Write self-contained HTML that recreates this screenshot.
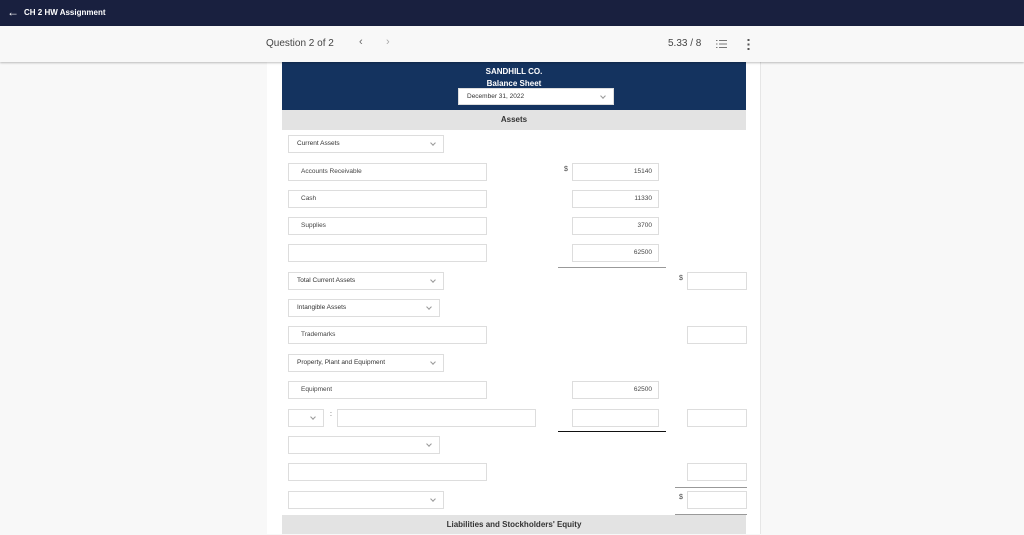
<!DOCTYPE html>
<html><head><meta charset="utf-8"><style>
*{box-sizing:border-box;margin:0;padding:0}
body{width:1024px;height:534px;overflow:hidden;background:#f8f8f8;font-family:"Liberation Sans",sans-serif;position:relative}
.a{position:absolute}
.top{left:0;top:0;width:1024px;height:26px;background:#19203f;color:#fff;font-size:8px;font-weight:bold}
.sub{left:0;top:26px;width:1024px;height:36px;background:#f8f8f8;box-shadow:0 1px 2px rgba(0,0,0,.25);z-index:2}
.page{left:267px;top:62px;width:494px;height:472px;background:#fff;border-right:1px solid #e6e6e6}
.navy{left:282px;top:62px;width:464px;height:48px;background:#14335f;color:#fff;text-align:center;font-size:8px;font-weight:bold}
.gray{background:#e3e3e3;font-size:8px;font-weight:bold;color:#333;text-align:center}
.in{border:1px solid #ddd;background:#fff;font-size:6.5px;color:#444;line-height:16px;padding-left:12px}
.sel{border:1px solid #ddd;background:#fff;font-size:6.5px;color:#333;line-height:16px;padding-left:8px}
.sel:after{content:"";position:absolute;right:8px;top:5px;width:3px;height:3px;border-right:1px solid #999;border-bottom:1px solid #999;transform:rotate(45deg)}
.num{border:1px solid #ddd;background:#fff;font-size:6.5px;color:#444;line-height:16px;text-align:right;padding-right:6px}
.d{font-size:7px;color:#444}
.ln{height:1px;background:#999}
</style></head><body>
<div class="a top"><span class="a" style="left:7px;top:5px;font-size:12px;font-weight:normal">&#8592;</span><span class="a" style="left:24px;top:8px">CH 2 HW Assignment</span></div>
<div class="a sub">
<span class="a" style="left:266px;top:12px;font-size:10px;color:#444">Question 2 of 2</span>
<span class="a" style="left:359px;top:10px;font-size:11px;color:#666">&#8249;</span>
<span class="a" style="left:386px;top:10px;font-size:11px;color:#aaa">&#8250;</span>
<span class="a" style="left:668px;top:12px;font-size:10px;color:#444">5.33 / 8</span>
<svg class="a" style="left:716px;top:13px" width="12" height="10" viewBox="0 0 12 10"><g fill="#777"><rect x="0" y="1" width="1.5" height="1"/><rect x="3" y="1" width="8" height="1"/><rect x="0" y="4.5" width="1.5" height="1"/><rect x="3" y="4.5" width="8" height="1"/><rect x="0" y="8" width="1.5" height="1"/><rect x="3" y="8" width="8" height="1"/></g></svg>
<svg class="a" style="left:747px;top:13px" width="3" height="11" viewBox="0 0 3 11"><g fill="#555"><rect x="0.5" y="0" width="2" height="2"/><rect x="0.5" y="4.5" width="2" height="2"/><rect x="0.5" y="9" width="2" height="2"/></g></svg>
</div>
<div class="a page"></div>
<div class="a navy"><div style="margin-top:5px">SANDHILL CO.</div><div style="margin-top:3px">Balance Sheet</div></div>
<div class="a sel" style="left:458px;top:88px;width:156px;height:17px;font-weight:normal">December 31, 2022</div>
<div class="a gray" style="left:282px;top:110px;width:464px;height:20px;line-height:20px">Assets</div>

<div class="a sel" style="left:288px;top:135px;width:156px;height:18px">Current Assets</div>
<div class="a in" style="left:288px;top:163px;width:199px;height:18px">Accounts Receivable</div>
<span class="a d" style="left:564px;top:166px">$</span>
<div class="a num" style="left:572px;top:163px;width:87px;height:18px">15140</div>
<div class="a in" style="left:288px;top:190px;width:199px;height:18px">Cash</div>
<div class="a num" style="left:572px;top:190px;width:87px;height:18px">11330</div>
<div class="a in" style="left:288px;top:217px;width:199px;height:18px">Supplies</div>
<div class="a num" style="left:572px;top:217px;width:87px;height:18px">3700</div>
<div class="a in" style="left:288px;top:244px;width:199px;height:18px"></div>
<div class="a num" style="left:572px;top:244px;width:87px;height:18px">62500</div>
<div class="a ln" style="left:558px;top:267px;width:108px"></div>
<div class="a sel" style="left:288px;top:272px;width:156px;height:18px">Total Current Assets</div>
<span class="a d" style="left:679px;top:275px">$</span>
<div class="a num" style="left:687px;top:272px;width:60px;height:18px"></div>
<div class="a sel" style="left:288px;top:299px;width:152px;height:18px">Intangible Assets</div>
<div class="a in" style="left:288px;top:326px;width:199px;height:18px">Trademarks</div>
<div class="a num" style="left:687px;top:326px;width:60px;height:18px"></div>
<div class="a sel" style="left:288px;top:354px;width:156px;height:18px">Property, Plant and Equipment</div>
<div class="a in" style="left:288px;top:381px;width:199px;height:18px">Equipment</div>
<div class="a num" style="left:572px;top:381px;width:87px;height:18px">62500</div>
<div class="a sel" style="left:288px;top:409px;width:36px;height:18px"></div>
<span class="a d" style="left:330px;top:411px">:</span>
<div class="a in" style="left:337px;top:409px;width:199px;height:18px"></div>
<div class="a num" style="left:572px;top:409px;width:87px;height:18px"></div>
<div class="a num" style="left:687px;top:409px;width:60px;height:18px"></div>
<div class="a" style="left:558px;top:431px;width:108px;height:1px;background:#111"></div>
<div class="a sel" style="left:288px;top:436px;width:152px;height:18px"></div>
<div class="a in" style="left:288px;top:463px;width:199px;height:18px"></div>
<div class="a num" style="left:687px;top:463px;width:60px;height:18px"></div>
<div class="a ln" style="left:675px;top:487px;width:72px"></div>
<div class="a sel" style="left:288px;top:491px;width:156px;height:18px"></div>
<span class="a d" style="left:679px;top:494px">$</span>
<div class="a num" style="left:687px;top:491px;width:60px;height:18px"></div>
<div class="a ln" style="left:675px;top:514px;width:72px"></div>
<div class="a gray" style="left:282px;top:515px;width:464px;height:19px;line-height:20px">Liabilities and Stockholders' Equity</div>
</body></html>
